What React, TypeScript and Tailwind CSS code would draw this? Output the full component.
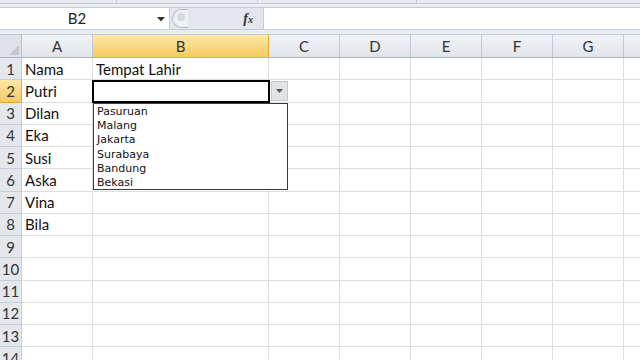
import React from "react";

const cols = [
  { label: "A", w: "w-[71px]" },
  { label: "B", w: "w-[176px]" },
  { label: "C", w: "w-[71px]" },
  { label: "D", w: "w-[71px]" },
  { label: "E", w: "w-[71px]" },
  { label: "F", w: "w-[71px]" },
  { label: "G", w: "w-[71px]" },
];

const rows: [string, string][] = [
  ["Nama", "Tempat Lahir"],
  ["Putri", ""],
  ["Dilan", ""],
  ["Eka", ""],
  ["Susi", ""],
  ["Aska", ""],
  ["Vina", ""],
  ["Bila", ""],
  ["", ""],
  ["", ""],
  ["", ""],
  ["", ""],
  ["", ""],
  ["", ""],
];

const cities = ["Pasuruan", "Malang", "Jakarta", "Surabaya", "Bandung", "Bekasi"];

export default function App() {
  return (
    <div className="w-[640px] h-[360px] overflow-hidden bg-white relative font-['Lato',sans-serif]">
      {/* ribbon bottom */}
      <div className="h-[4px] bg-[#e6eaef] border-b border-[#c5cbd3] flex">
        <div className="w-[117px] border-r border-[#c9cfd6]" />
        <div className="w-[141px] border-r border-[#c9cfd6]" />
        <div className="w-[159px] border-r border-[#c9cfd6]" />
      </div>

      {/* formula bar */}
      <div className="h-[31px] bg-[#e9edf1] pt-[3px] border-b border-[#c5cbd3]">
        <div className="h-[23px] flex bg-white border-y border-[#c6ccd3]">
          <div className="w-[170px] flex items-center relative border-r border-[#c6ccd3]">
            <span className="w-[154px] text-center text-[15px] text-[#222] leading-none">B2</span>
            <svg width="8" height="5" viewBox="0 0 8 5" className="absolute left-[157px] top-[9px]">
              <path d="M0 0 H8 L4 4.5 Z" fill="#333" />
            </svg>
          </div>
          <div className="w-[94px] bg-[#e3e7ec] flex items-center border-r border-[#c6ccd3] relative">
            <div className="absolute left-[2px] top-[1px] w-[16px] h-[19px] rounded-l-full border-l border-y border-[#b8bec6] bg-[#eef1f4]" />
            <div className="absolute left-[7px] top-[5px] w-[8px] h-[8px] rounded-full bg-[#d5d9de]" />
            <span className="absolute right-[10px] top-[1px] font-['Liberation_Serif',serif] italic font-bold text-[14px] text-[#333] leading-[19px]">
              f<span className="text-[10px]">x</span>
            </span>
          </div>
          <div className="flex-1" />
        </div>
      </div>

      {/* column headers */}
      <div className="flex h-[23px] border-b border-[#a9b3c0]">
        <div className="w-[22px] bg-[#dfe3e8] border-r border-[#b7c0cb] relative">
          <svg width="10" height="10" viewBox="0 0 10 10" className="absolute right-[2px] bottom-[2px]">
            <path d="M10 0 V10 H0 Z" fill="#c2c8cf" />
          </svg>
        </div>
        {cols.map((c) => (
          <div
            key={c.label}
            className={`${c.w} shrink-0 flex items-center justify-center text-[15px] leading-none border-r ${
              c.label === "B"
                ? "bg-gradient-to-b from-[#fde8a6] to-[#f6ca5e] border-[#e8a93a] text-[#333]"
                : "bg-gradient-to-b from-[#f1f3f6] to-[#e1e5ea] border-[#c2cad4] text-[#333]"
            }`}
          >
            {c.label}
          </div>
        ))}
        <div className="flex-1 bg-gradient-to-b from-[#f1f3f6] to-[#e1e5ea]" />
      </div>

      {/* grid */}
      <div className="flex flex-col">
        {rows.map((r, i) => (
          <div key={i} className="flex h-[22.25px] shrink-0">
            <div
              className={`w-[22px] shrink-0 flex items-center justify-center text-[15px] leading-none pt-[1px] border-r border-b ${
                i === 1
                  ? "bg-gradient-to-b from-[#fde8a6] to-[#f6ca5e] border-[#e8a93a] text-[#333]"
                  : "bg-[#e4e8ed] border-[#c6ced8] text-[#333]"
              }`}
            >
              {i + 1}
            </div>
            {cols.map((c, j) => (
              <div
                key={c.label}
                className={`${c.w} shrink-0 border-r border-b border-[#dcdfe2] flex items-center px-[3px] pt-[1px] text-[15px] text-[#111] leading-none`}
              >
                {j === 0 ? r[0] : j === 1 ? r[1] : ""}
              </div>
            ))}
            <div className="flex-1 border-b border-[#dcdfe2]" />
          </div>
        ))}
      </div>

      {/* selected cell B2 */}
      <div className="absolute left-[92px] top-[80px] w-[178px] h-[23px] border-2 border-black" />
      {/* dropdown button */}
      <div className="absolute left-[271px] top-[81px] w-[17px] h-[20px] bg-[#e1e3e6] border border-[#c3c7cc] flex items-center justify-center">
        <svg width="7" height="4" viewBox="0 0 7 4">
          <path d="M0 0 H7 L3.5 4 Z" fill="#555" />
        </svg>
      </div>
      {/* dropdown list */}
      <div className="absolute left-[93px] top-[103px] w-[195px] h-[87px] bg-white border border-[#3c3c3c] pl-[3px] pt-[1px] font-['DejaVu_Sans',sans-serif] text-[11px] text-[#111]">
        {cities.map((c) => (
          <div key={c} className="h-[14.2px] leading-[14.2px]">
            {c}
          </div>
        ))}
      </div>
    </div>
  );
}
